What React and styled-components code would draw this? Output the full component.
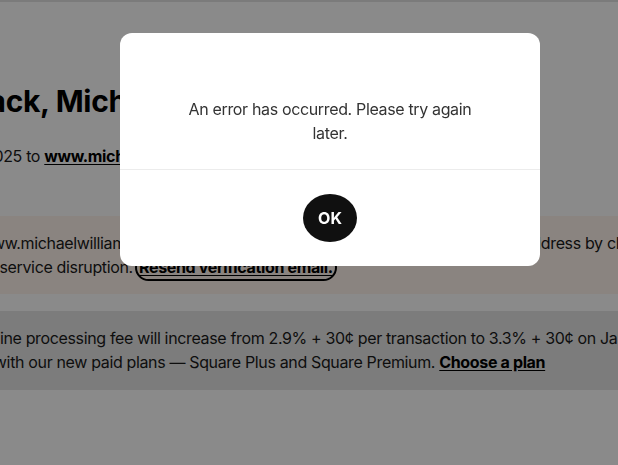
import React from "react";
import styled, { createGlobalStyle } from "styled-components";

const Global = createGlobalStyle`
  html, body { margin: 0; padding: 0; background: #ffffff; overflow: hidden; }
  body { font-family: Inter, "Noto Sans", Arial, sans-serif; color: #1a1a1a; -webkit-font-smoothing: antialiased; }
`;

const Page = styled.div`
  width: 618px;
  height: 465px;
  overflow: hidden;
  background: #ffffff;
  border-top: 2px solid #e4e4e4;
  box-sizing: border-box;
`;

const Content = styled.main`
  width: 1200px;
  margin-left: -172px;
  padding-top: 81px;
  display: flex;
  flex-direction: column;
`;

const Heading = styled.h1`
  margin: 0;
  font-size: 30px;
  line-height: 36px;
  font-weight: 700;
  letter-spacing: -0.3px;
  color: #000;
  white-space: nowrap;
`;

const Subtitle = styled.p`
  margin: 25px 0 0;
  font-size: 16px;
  line-height: 24px;
  letter-spacing: -0.35px;
  color: #1a1a1a;
  white-space: nowrap;
`;

const StrongLink = styled.a`
  color: #000;
  font-weight: 700;
  text-decoration: underline;
  text-underline-offset: 2px;
`;

const Banners = styled.div`
  margin-top: 48px;
  display: flex;
  flex-direction: column;
  gap: 17px;
`;

const Banner = styled.div`
  background: ${(p) => (p.$tone === "warning" ? "#fff4ec" : "#e5e5e5")};
  padding: 15px 16px ${(p) => (p.$tone === "warning" ? "15px" : "16px")};
  border-radius: 6px;
  font-size: 16px;
  line-height: 24px;
  letter-spacing: -0.35px;
  text-indent: ${(p) => (p.$tone === "warning" ? "0" : "4px")};
  color: #1a1a1a;
  white-space: nowrap;
`;

const RingButton = styled.button`
  display: inline-block;
  font: inherit;
  font-weight: 700;
  letter-spacing: -0.35px;
  line-height: 23px;
  text-indent: 0;
  color: #000;
  background: transparent;
  border: none;
  padding: 0 2px;
  margin: 0;
  text-decoration: underline;
  text-underline-offset: 2px;
  border-radius: 14px;
  box-shadow: 0 0 0 2px #000;
  cursor: pointer;
`;

const Overlay = styled.div`
  position: fixed;
  top: 0;
  left: 0;
  bottom: 0;
  width: 660px;
  background: rgba(0, 0, 0, 0.46);
  display: flex;
  justify-content: center;
  align-items: flex-start;
  padding-top: 33px;
  box-sizing: border-box;
`;

const Dialog = styled.div`
  width: 420px;
  background: #ffffff;
  border-radius: 12px;
  display: flex;
  flex-direction: column;
  overflow: hidden;
`;

const DialogBody = styled.div`
  padding: 64px 56px 24px;
  text-align: center;
  font-size: 16px;
  line-height: 24px;
  letter-spacing: -0.35px;
  color: #333333;
`;

const DialogFooter = styled.div`
  border-top: 1px solid #ececec;
  padding: 24px;
  display: flex;
  justify-content: center;
`;

const OkButton = styled.button`
  height: 48px;
  min-width: 54px;
  padding: 0 14px;
  border: none;
  border-radius: 50%;
  background: #101010;
  color: #ffffff;
  font-family: inherit;
  font-size: 16px;
  font-weight: 700;
  cursor: pointer;
`;

export default function App() {
  return (
    <>
      <Global />
      <Page>
        <Content>
          <Heading>Welcome back, Michael</Heading>
          <Subtitle>
            Published on July 14, 2025 to{" "}
            <StrongLink href="#">www.michaelwilliams.com</StrongLink>
          </Subtitle>
          <Banners>
            <Banner $tone="warning">
              Verify the email of www.michaelwilliams.com. To keep it published, please confirm your email address by clicking the link we sent to
              <br />
              prevent any potential service disruption.{" "}
              <RingButton type="button">Resend verification email.</RingButton>
            </Banner>
            <Banner>
              Heads up — your online processing fee will increase from 2.9% + 30¢ per transaction to 3.3% + 30¢ on January 1, 2026.
              <br />
              Save on every order with our new paid plans — Square Plus and Square Premium.{" "}
              <StrongLink href="#">Choose a plan</StrongLink>
            </Banner>
          </Banners>
        </Content>
      </Page>
      <Overlay>
        <Dialog role="alertdialog">
          <DialogBody>An error has occurred. Please try again later.</DialogBody>
          <DialogFooter>
            <OkButton type="button">OK</OkButton>
          </DialogFooter>
        </Dialog>
      </Overlay>
    </>
  );
}
